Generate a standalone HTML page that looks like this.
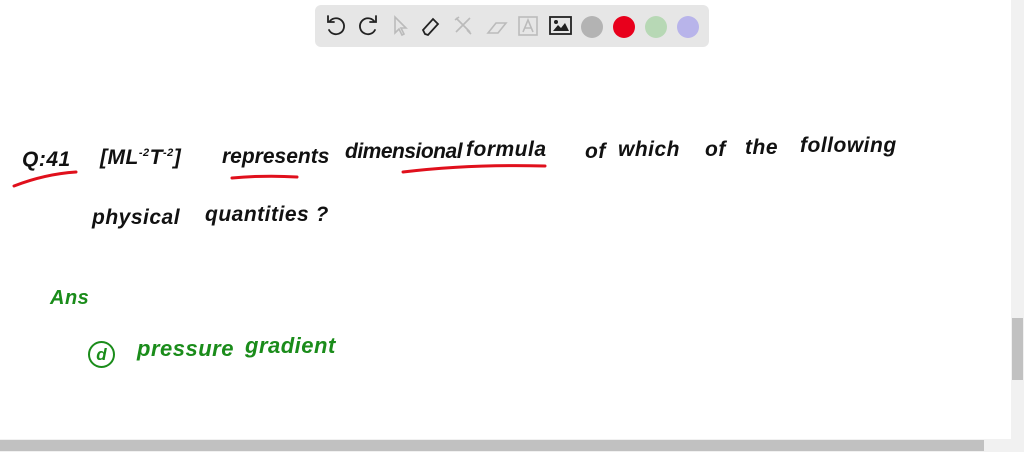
<!DOCTYPE html>
<html><head><meta charset="utf-8"><style>
html,body{margin:0;padding:0;width:1024px;height:452px;overflow:hidden;background:#fff;font-family:"Liberation Sans",sans-serif;}
.t{position:absolute;white-space:nowrap;font-family:"Liberation Sans",sans-serif;font-style:italic;font-weight:bold;color:#111;font-size:21px;letter-spacing:0.5px;}
.g{color:#1a8c1a;}
#tb{position:absolute;left:315px;top:5px;width:394px;height:42px;background:#e6e6e6;border-radius:6px;}
.dot{position:absolute;top:16px;width:22px;height:22px;border-radius:50%;}
</style></head><body>
<div id="tb"></div>
<svg style="position:absolute;left:0;top:0" width="1024" height="452">
<g fill="none" stroke="#222" stroke-width="1.8" stroke-linecap="round">
<path d="M330 21 a8 8 0 1 1 -1 9"/><path d="M328 16 v6 h6"/>
<path d="M374 21 a8 8 0 1 0 1 9"/><path d="M376 16 v6 h-6"/>
<path d="M425 34 l-2 -4 l10 -11 l5 5 l-10 11 z"/>
<rect x="550" y="17" width="21" height="17"/>
</g>
<path d="M553 31 l5 -6 l3 3 l4 -5 l4 8 z" fill="#222"/><circle cx="556" cy="22" r="2" fill="#222"/>
<g fill="none" stroke="#bbb" stroke-width="1.6">
<path d="M395 17 l0 16 l4 -4 l3 6 l2 -1 l-3 -6 l5 0 z"/>
<path d="M456 18 l14 14 M470 18 l-14 14 M455 20 l4 -3 M467 30 l4 4"/>
<path d="M488 33 l8 -10 l10 0 l-8 10 z"/>
<rect x="519" y="17" width="18" height="18"/><path d="M523 32 l5 -12 l5 12 M525 28 h6"/>
</g>
</svg>
<div class="dot" style="left:581px;background:#b3b3b3"></div>
<div class="dot" style="left:613px;background:#e8001c"></div>
<div class="dot" style="left:645px;background:#b7d8b5"></div>
<div class="dot" style="left:677px;background:#b8b4ea"></div>

<div class="t" style="left:22px;top:148px">Q:41</div>
<div class="t" style="left:100px;top:146px">[ML<sup style="font-size:11px">-2</sup>T<sup style="font-size:11px">-2</sup>]</div>
<div class="t" style="left:222px;top:145px;letter-spacing:0">represents</div>
<div class="t" style="left:345px;top:140px;letter-spacing:-0.5px">dimensional</div>
<div class="t" style="left:466px;top:138px">formula</div>
<div class="t" style="left:585px;top:140px">of</div>
<div class="t" style="left:618px;top:138px">which</div>
<div class="t" style="left:705px;top:138px">of</div>
<div class="t" style="left:745px;top:136px">the</div>
<div class="t" style="left:800px;top:134px">following</div>
<div class="t" style="left:92px;top:206px">physical</div>
<div class="t" style="left:205px;top:203px">quantities ?</div>
<div class="t g" style="left:50px;top:287px;font-size:20px">Ans</div>
<div class="t g" style="left:88px;top:341px;width:23px;height:23px;border:2px solid #1a8c1a;border-radius:50%;font-size:17px;text-align:center;line-height:23px;letter-spacing:0">d</div>
<div class="t g" style="left:137px;top:336px;font-size:22px">pressure</div>
<div class="t g" style="left:245px;top:333px;font-size:22px">gradient</div>

<svg style="position:absolute;left:0;top:0" width="1024" height="452">
<g fill="none" stroke="#e0101c" stroke-width="3" stroke-linecap="round">
<path d="M14 186 Q45 174 76 172"/>
<path d="M232 178 Q265 175 297 177"/>
<path d="M403 172 Q470 164 545 166"/>
</g>
</svg>

<div style="position:absolute;left:1011px;top:0;width:13px;height:439px;background:#f1f1f1"></div>
<div style="position:absolute;left:1012px;top:318px;width:11px;height:62px;background:#c1c1c1"></div>
<div style="position:absolute;left:0;top:439px;width:1024px;height:13px;background:#f1f1f1"></div>
<div style="position:absolute;left:0;top:440px;width:984px;height:11px;background:#c1c1c1"></div>
</body></html>
